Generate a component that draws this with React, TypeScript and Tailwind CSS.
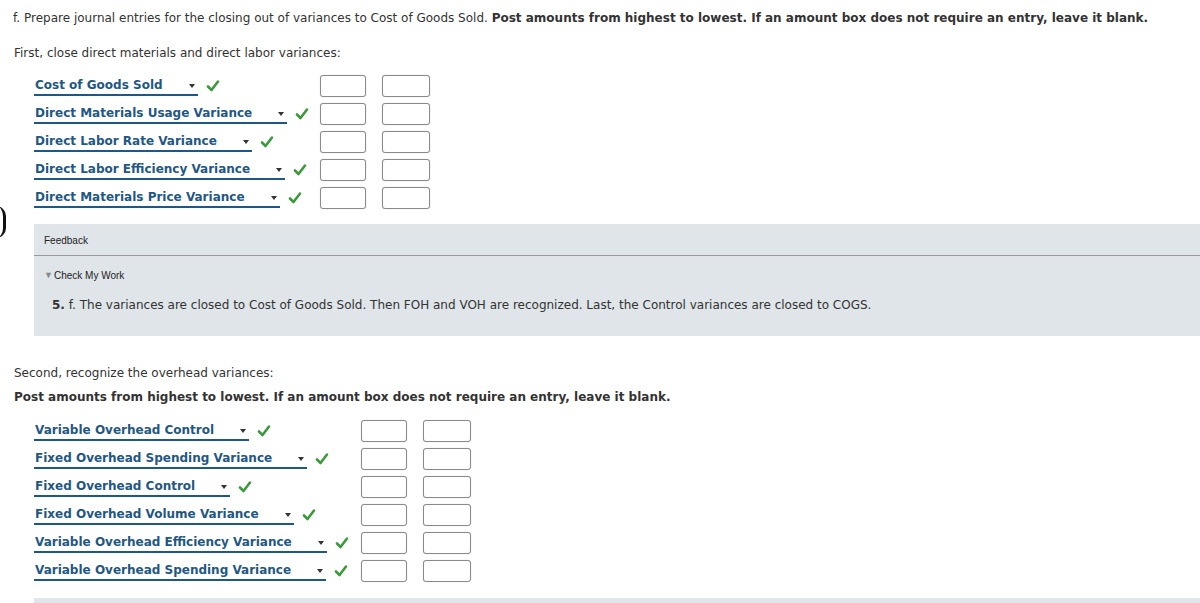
import { Fragment } from "react";

const first = [
  "Cost of Goods Sold",
  "Direct Materials Usage Variance",
  "Direct Labor Rate Variance",
  "Direct Labor Efficiency Variance",
  "Direct Materials Price Variance",
];

const second = [
  "Variable Overhead Control",
  "Fixed Overhead Spending Variance",
  "Fixed Overhead Control",
  "Fixed Overhead Volume Variance",
  "Variable Overhead Efficiency Variance",
  "Variable Overhead Spending Variance",
];

const Check = () => (
  <svg width="14" height="14" viewBox="0 0 14 14" className="shrink-0">
    <path d="M2 7.5 L5.5 11 L12 2.5" fill="none" stroke="#3c9a3c" strokeWidth="2.6" strokeLinecap="round" strokeLinejoin="round" />
  </svg>
);

function Entry({ label, labelWidth }: { label: string; labelWidth: string }) {
  return (
    <div className="flex items-center h-[28px]">
      <div className={`flex items-center gap-[8px] ${labelWidth}`}>
        <div className="relative h-[20px] flex items-end pr-[35px] pl-[1px] border-b-2 border-[#1f5785] bg-white">
          <span className="font-bold text-[#1f5785] text-[12px] leading-[17px] whitespace-nowrap">{label}</span>
          <span className="absolute right-[3px] top-[8px] w-0 h-0 border-l-[3px] border-r-[3px] border-t-[4px] border-l-transparent border-r-transparent border-t-[#333]" />
        </div>
        <Check />
      </div>
      <div className="w-[46px] h-[22px] border border-[#8a8a8a] rounded-[3px] shadow-[0_0_1px_#bbb] bg-white" />
      <div className="w-[48px] h-[22px] ml-[16px] border border-[#8a8a8a] rounded-[3px] shadow-[0_0_1px_#bbb] bg-white" />
    </div>
  );
}

export default function App() {
  return (
    <div className="relative w-[1200px] h-[603px] overflow-hidden bg-white text-[#333] text-[12px] font-['DejaVu_Sans',Verdana,sans-serif]">
      {/* stray bracket at left edge */}
      <div className="absolute left-[-14px] top-[206px] w-[20px] h-[32px] border-r-[3px] border-[#111] rounded-full" />

      <p className="pl-[13px] pt-[9px] leading-[18px] whitespace-nowrap">
        f. Prepare journal entries for the closing out of variances to Cost of Goods Sold.{" "}
        <b>Post amounts from highest to lowest. If an amount box does not require an entry, leave it blank.</b>
      </p>
      <p className="pl-[14px] pt-[17px] leading-[18px]">First, close direct materials and direct labor variances:</p>

      <div className="pl-[34px] pt-[10px]">
        {first.map((l) => (
          <Fragment key={l}>
            <Entry label={l} labelWidth="w-[286px]" />
          </Fragment>
        ))}
      </div>

      <div className="ml-[34px] mt-[12px] h-[112px] bg-[#dfe5e9] font-['Liberation_Sans',Arial,sans-serif]">
        <div className="pl-[10px] pt-[9px] h-[32px] text-[10px] text-[#222] border-b border-[#999]">Feedback</div>
        <div className="pl-[10px] pt-[12px] text-[10px] text-[#222] flex items-center gap-[1px]">
          <span className="text-[#888] text-[9px]">▼</span>Check My Work
        </div>
        <p className="pl-[18px] pt-[13px] text-[12px] text-[#333] font-['DejaVu_Sans',Verdana,sans-serif]">
          <b>5.</b> f. The variances are closed to Cost of Goods Sold. Then FOH and VOH are recognized. Last, the Control variances are closed to COGS.
        </p>
      </div>

      <p className="pl-[14px] pt-[28px] leading-[18px]">Second, recognize the overhead variances:</p>
      <p className="pl-[14px] pt-[6px] leading-[18px] font-bold">
        Post amounts from highest to lowest. If an amount box does not require an entry, leave it blank.
      </p>

      <div className="pl-[34px] pt-[11px]">
        {second.map((l) => (
          <Fragment key={l}>
            <Entry label={l} labelWidth="w-[327px]" />
          </Fragment>
        ))}
      </div>

      <div className="ml-[34px] mt-[13px] h-[20px] bg-[#dfe5e9]" />
    </div>
  );
}
